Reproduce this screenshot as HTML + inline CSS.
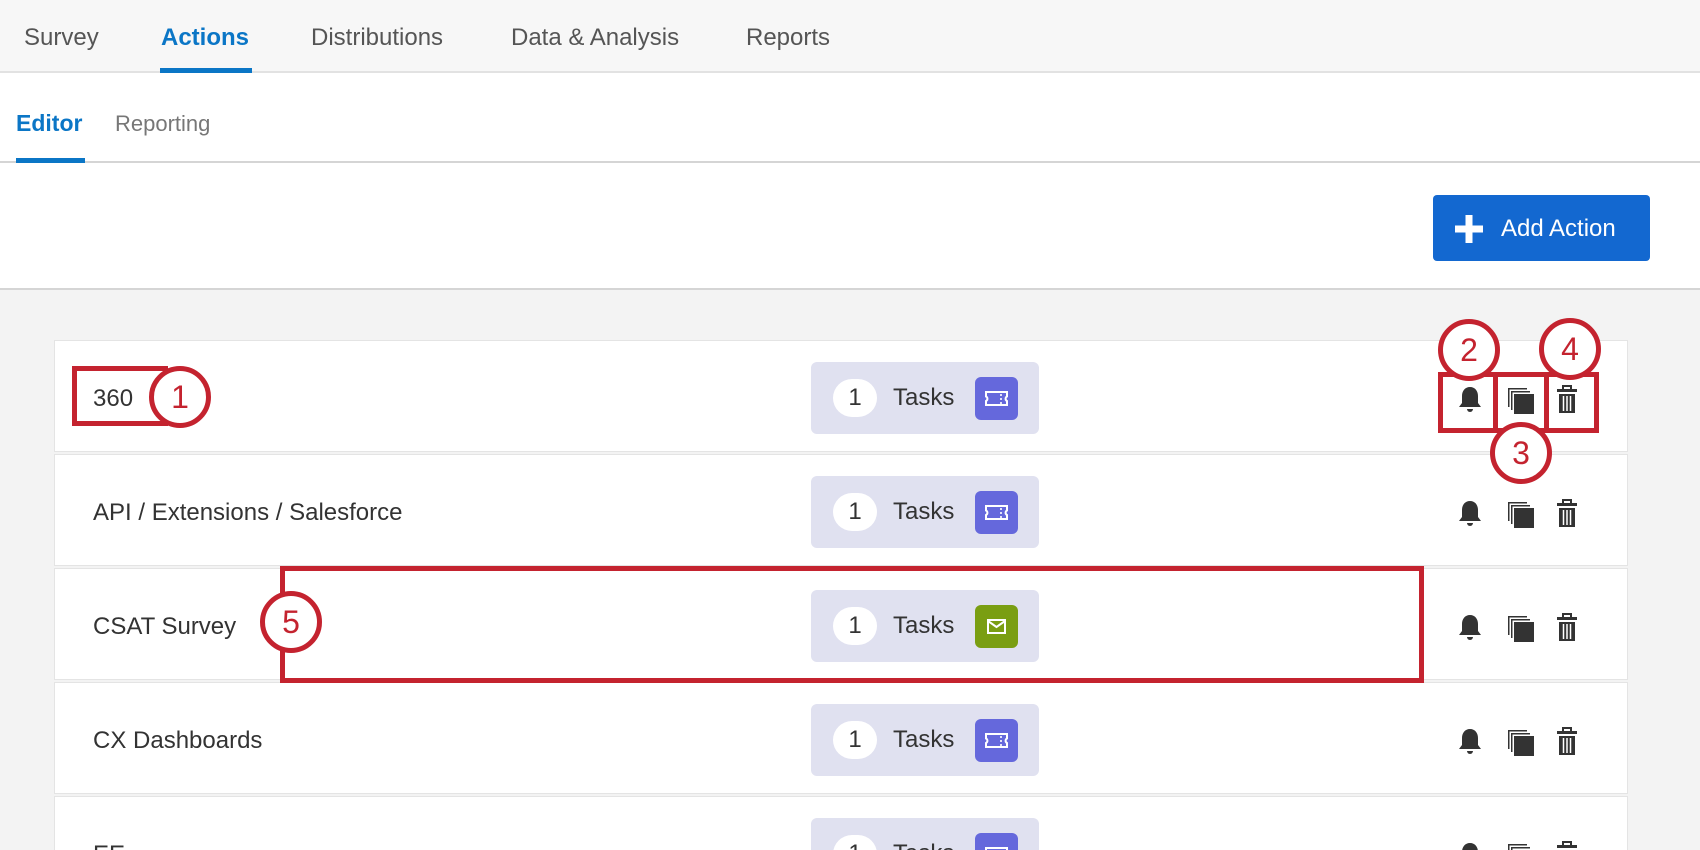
<!DOCTYPE html>
<html><head><meta charset="utf-8"><style>
*{margin:0;padding:0;box-sizing:border-box}
html,body{width:1700px;height:850px;overflow:hidden}
body{background:#f3f3f3;font-family:"Liberation Sans",sans-serif;position:relative;color:#333}
.a{position:absolute}
.nav{left:0;top:0;width:1700px;height:73px;background:#f7f7f7;border-bottom:2px solid #e2e2e2}
.nt{top:24px;font-size:24px;color:#555}
.sub{left:0;top:73px;width:1700px;height:90px;background:#fff;border-bottom:2px solid #d5d5d5}
.tb{left:0;top:163px;width:1700px;height:127px;background:#fff;border-bottom:2px solid #d5d5d5}
.btn{left:1433px;top:195px;width:217px;height:66px;background:#1368d0;border-radius:4px;color:#fff;font-size:24px}
.row{left:54px;width:1574px;height:112px;background:#fff;border:1px solid #e4e4e4}
.name{left:38px;top:44px;font-size:24px;color:#333}
.pill{left:756px;top:21px;width:228px;height:72px;background:#e0e1f0;border-radius:6px}
.num{left:22px;top:17px;width:44px;height:38px;border-radius:19px;background:#fff;font-size:24px;text-align:center;line-height:38px}
.tk{left:82px;top:22px;font-size:24px}
.ic{left:164px;top:15px;width:43px;height:43px;border-radius:6px;background:#6568dc}
.red{border:5px solid #c4232f}
.circ{width:62px;height:62px;border-radius:50%;border:5px solid #c4232f;background:#fff;color:#c4232f;font-size:32px;text-align:center;line-height:52px}
</style></head><body>
<div class="a nav"></div>
<div class="a nt" style="left:24px">Survey</div>
<div class="a nt" style="left:161px;color:#0b76c6;font-weight:bold">Actions</div>
<div class="a" style="left:160px;top:68px;width:92px;height:5px;background:#0b76c6"></div>
<div class="a nt" style="left:311px">Distributions</div>
<div class="a nt" style="left:511px">Data &amp; Analysis</div>
<div class="a nt" style="left:746px">Reports</div>
<div class="a sub"></div>
<div class="a" style="left:16px;top:110px;font-size:23px;font-weight:bold;color:#0b76c6">Editor</div>
<div class="a" style="left:115px;top:111px;font-size:22px;color:#777">Reporting</div>
<div class="a" style="left:16px;top:158px;width:69px;height:5px;background:#0b76c6"></div>
<div class="a tb"></div>
<div class="a btn"><svg class="a" style="left:22px;top:20px" width="28" height="28" viewBox="0 0 28 28"><path d="M10.5 0h7v10.5H28v7H17.5V28h-7V17.5H0v-7h10.5z" fill="#fff"/></svg><span class="a" style="left:68px;top:20px">Add Action</span></div>

<div id="rows"></div>
<script>
const names=["360","API / Extensions / Salesforce","CSAT Survey","CX Dashboards","EE"];
const tops=[340,454,568,682,796];
const ticket='<svg width="43" height="43" viewBox="0 0 43 43"><path d="M11 15h21v4.5a2.5 2.5 0 0 0 0 4.5V28H11v-4a2.5 2.5 0 0 0 0-4.5z" fill="none" stroke="#fff" stroke-width="2"/><path d="M26 17v2M26 21v2M26 25v2" stroke="#fff" stroke-width="1.6"/></svg>';
const mail='<svg width="43" height="43" viewBox="0 0 43 43"><rect x="13" y="15" width="17" height="13" fill="none" stroke="#fff" stroke-width="2"/><path d="M13 16l8.5 6 8.5-6" fill="none" stroke="#fff" stroke-width="2"/></svg>';
const bell='<svg width="30" height="32" viewBox="0 0 30 32"><path d="M15 3c-5 0-8 4-8 9v7l-3 4h22l-3-4v-7c0-5-3-9-8-9z" fill="#333"/><path d="M12 25a3 3 0 0 0 6 0z" fill="#333"/></svg>';
const copy='<svg width="32" height="32" viewBox="0 0 32 32"><path d="M3 4h19v1.5H4.5V23H3z" fill="#333"/><path d="M6 7h19v1.5H7.5V26H6z" fill="#333"/><rect x="9" y="10" width="20" height="20" fill="#333"/></svg>';
const trash='<svg width="30" height="32" viewBox="0 0 30 32"><rect x="5" y="5" width="20" height="3" fill="#333"/><rect x="11" y="2" width="8" height="4" fill="none" stroke="#333" stroke-width="2"/><path d="M7 10h16v19H7z" fill="#333"/><path d="M11.5 12v15M15 12v15M18.5 12v15" stroke="#fff" stroke-width="1.5"/></svg>';
let h='';
names.forEach((n,i)=>{
h+=`<div class="a row" style="top:${tops[i]}px"><div class="a name">${n}</div><div class="a pill"><div class="a num">1</div><div class="a tk">Tasks</div><div class="a ic" style="${i==2?'background:#7a9e12':''}">${i==2?mail:ticket}</div></div>
<div class="a" style="left:1400px;top:43px">${bell}</div><div class="a" style="left:1450px;top:43px">${copy}</div><div class="a" style="left:1497px;top:43px">${trash}</div></div>`;
});
document.getElementById('rows').innerHTML=h;
</script>

<div class="a red" style="left:72px;top:366px;width:96px;height:60px"></div>
<div class="a circ" style="left:149px;top:366px">1</div>
<div class="a red" style="left:1438px;top:372px;width:161px;height:61px"></div>
<div class="a" style="left:1493px;top:372px;width:5px;height:61px;background:#c4232f"></div>
<div class="a" style="left:1544px;top:372px;width:5px;height:61px;background:#c4232f"></div>
<div class="a circ" style="left:1438px;top:319px">2</div>
<div class="a circ" style="left:1539px;top:318px">4</div>
<div class="a circ" style="left:1490px;top:422px">3</div>
<div class="a red" style="left:280px;top:566px;width:1144px;height:117px"></div>
<div class="a circ" style="left:260px;top:591px">5</div>
</body></html>
